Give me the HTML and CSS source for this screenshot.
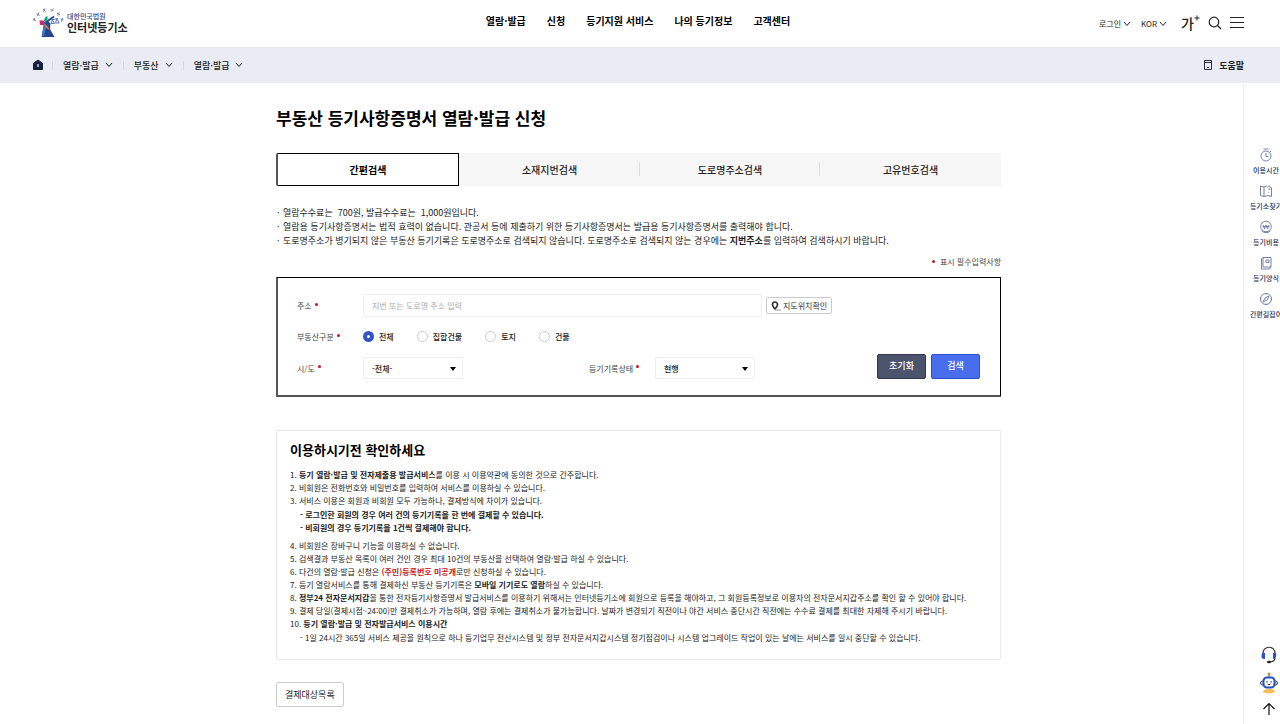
FILE: index.html
```html
<!DOCTYPE html>
<html lang="ko">
<head>
<meta charset="utf-8">
<meta name="viewport" content="width=device-width, initial-scale=1">
<title>인터넷등기소</title>
<link rel="stylesheet" href="styles.css">
</head>
<body>
<header class="header">
  <a class="logo" href="#">
    <svg class="logo-mark" viewBox="0 0 32 30" aria-hidden="true">
      <g fill="none" stroke="#6c80b8" stroke-width="1">
        <path d="M1 11l3 1.500M2.500 10l-.5 3M4.500 5.500l3 2M7 4.500l-1.500 3.500M11 1l2.500 2.500M13 .5l-1.500 3.500M18.500 1.500l3 1.500M21.500 .5l-2 3M25 5l3 2M27.500 4.500l-2 3M28.500 11l3 1M30.500 10l-1 3.500"/>
      </g>
      <path d="M12 14l4-1.500 2.500 3.500-.5 5 4.500 8H9.500l1.500-8z" fill="#24478f"/>
      <path d="M12 14l-2 14h2l2-9z" fill="#3f7cc4"/>
      <path d="M7.500 12.500h4.500V17H8z" fill="#d81f70"/>
      <path d="M12 12.500l1-3 2.500-1.500V12l-2 3z" fill="#169b78"/>
      <path d="M12 15.500q4 2 5.500 6.500-4-1.500-5.500-6.500z" fill="#ee7a2a"/>
      <path d="M15.500 13L22 8.500" stroke="#24478f" stroke-width="1.800"/>
      <path d="M19 12l7-1.500M20.500 11.500l-1.500 4M20.500 11.500l2 4M25 10.500L23.500 15M25 10.500l2 4.500M18.500 15.500h4M23.500 15h4" fill="none" stroke="#4f6db0" stroke-width=".9"/>
    </svg>
    <span class="logo-text"><small>대한민국법원</small><strong>인터넷등기소</strong></span>
  </a>
  <nav class="gnb" aria-label="주 메뉴">
    <a href="#">열람·발급</a><a href="#">신청</a><a href="#">등기지원 서비스</a><a href="#">나의 등기정보</a><a href="#">고객센터</a>
  </nav>
  <div class="utils">
    <button class="util" type="button">로그인<svg class="chevron" viewBox="0 0 8 6"><path d="M1 1l3 3.500L7 1"/></svg></button>
    <button class="util" type="button">KOR<svg class="chevron" viewBox="0 0 8 6"><path d="M1 1l3 3.500L7 1"/></svg></button>
    <button class="font-size" type="button">가<svg viewBox="0 0 6 6" aria-hidden="true"><path d="M3 .5v5M.5 3h5"/></svg></button>
    <button class="icon-button" type="button" aria-label="검색"><svg viewBox="0 0 14 14"><circle cx="6" cy="6" r="4.800"/><path d="M9.500 9.500L13 13"/></svg></button>
    <button class="icon-button" type="button" aria-label="전체메뉴"><svg viewBox="0 0 14 14"><path d="M0 1.500h14M0 6.500h14M0 11.500h14"/></svg></button>
  </div>
</header>
<div class="crumb-bar">
  <nav class="crumbs" aria-label="현재 위치">
    <a class="home" href="#" aria-label="홈"><svg viewBox="0 0 12 12"><path d="M6 1l4.500 3.300V10.500h-9V4.300z" fill="#17203f" stroke="#17203f" stroke-linejoin="round"/><path d="M6 5v3" stroke="#fff" stroke-width="1.200"/></svg></a>
    <button class="crumb" type="button">열람·발급<svg class="chevron" viewBox="0 0 8 6"><path d="M1 1l3 3.500L7 1"/></svg></button>
    <button class="crumb" type="button">부동산<svg class="chevron" viewBox="0 0 8 6"><path d="M1 1l3 3.500L7 1"/></svg></button>
    <button class="crumb" type="button">열람·발급<svg class="chevron" viewBox="0 0 8 6"><path d="M1 1l3 3.500L7 1"/></svg></button>
  </nav>
  <a class="help" href="#"><svg viewBox="0 0 10 10" aria-hidden="true"><path d="M1.500 .5h7v9h-7zM1.500 2.500h7M4 7.500h2" fill="none" stroke="#2a3040"/></svg>도움말</a>
</div>
<div class="page">
  <main class="main">
    <div class="content">
    <h1>부동산 등기사항증명서 열람·발급 신청</h1>
    <div class="tabs" role="tablist">
      <button class="tab tab-active" type="button" role="tab" aria-selected="true">간편검색</button>
      <button class="tab" type="button" role="tab">소재지번검색</button>
      <button class="tab" type="button" role="tab">도로명주소검색</button>
      <button class="tab" type="button" role="tab">고유번호검색</button>
    </div>
    <ul class="notes">
      <li>열람수수료는 &nbsp;700원, 발급수수료는 &nbsp;1,000원입니다.</li>
      <li>열람용 등기사항증명서는 법적 효력이 없습니다. 관공서 등에 제출하기 위한 등기사항증명서는 발급용 등기사항증명서를 출력해야 합니다.</li>
      <li>도로명주소가 병기되지 않은 부동산 등기기록은 도로명주소로 검색되지 않습니다. 도로명주소로 검색되지 않는 경우에는 <b>지번주소</b>를 입력하여 검색하시기 바랍니다.</li>
    </ul>
    <p class="required-note"><i class="dot"></i>표시 필수입력사항</p>
    <form class="search">
      <div class="row">
        <label class="label" for="address">주소<i class="dot"></i></label>
        <input class="address" id="address" type="text" placeholder="지번 또는 도로명 주소 입력">
        <button class="map" type="button"><svg viewBox="0 0 10 10" aria-hidden="true"><path d="M4 8C2 6 1.500 5 1.500 3.500a2.500 2.500 0 0 1 5 0C6.500 5 6 6 4 8z" fill="none" stroke="#333" stroke-width="1.700"/><path d="M4 9h6" stroke="#999"/></svg>지도위치확인</button>
      </div>
      <div class="row" role="radiogroup" aria-labelledby="kind">
        <span class="label" id="kind">부동산구분<i class="dot"></i></span>
        <div class="radios">
          <label><input type="radio" name="kind" checked>전체</label>
          <label><input type="radio" name="kind">집합건물</label>
          <label><input type="radio" name="kind">토지</label>
          <label><input type="radio" name="kind">건물</label>
        </div>
      </div>
      <div class="row row-last">
        <label class="label" for="region">시/도<i class="dot"></i></label>
        <span class="select"><select id="region"><option>-전체-</option></select></span>
        <label class="label label-status" for="status">등기기록상태<i class="dot"></i></label>
        <span class="select"><select id="status"><option>현행</option></select></span>
        <div class="actions">
          <button class="reset" type="reset">초기화</button>
          <button class="submit" type="button">검색</button>
        </div>
      </div>
    </form>
    <section class="notice">
      <h2>이용하시기전 확인하세요</h2>
      <ul class="notice-list">
        <li>1. <b>등기 열람·발급 및 전자제출용 발급서비스</b>를 이용 시 이용약관에 동의한 것으로 간주합니다.</li>
        <li>2. 비회원은 전화번호와 비밀번호를 입력하여 서비스를 이용하실 수 있습니다.</li>
        <li>3. 서비스 이용은 회원과 비회원 모두 가능하나, 결제방식에 차이가 있습니다.
          <ul class="sub sub-spaced"><li><b>- 로그인한 회원의 경우 여러 건의 등기기록을 한 번에 결제할 수 있습니다.</b></li><li><b>- 비회원의 경우 등기기록을 1건씩 결제해야 합니다.</b></li></ul>
        </li>
        <li>4. 비회원은 장바구니 기능을 이용하실 수 없습니다.</li>
        <li>5. 검색결과 부동산 목록이 여러 건인 경우 최대 10건의 부동산을 선택하여 열람·발급 하실 수 있습니다.</li>
        <li>6. 다건의 열람·발급 신청은 <b class="alert">(주민)등록번호 미공개</b>로만 신청하실 수 있습니다.</li>
        <li>7. 등기 열람서비스를 통해 결제하신 부동산 등기기록은 <b>모바일 기기로도 열람</b>하실 수 있습니다.</li>
        <li>8. <b>정부24 전자문서지갑</b>을 통한 전자등기사항증명서 발급서비스를 이용하기 위해서는 인터넷등기소에 회원으로 등록을 해야하고, 그 회원등록정보로 이용자의 전자문서지갑주소를 확인 할 수 있어야 합니다.</li>
        <li>9. 결제 당일(결제시점~24:00)만 결제취소가 가능하며, 열람 후에는 결제취소가 불가능합니다. 날짜가 변경되기 직전이나 야간 서비스 중단시간 직전에는 수수료 결제를 최대한 자제해 주시기 바랍니다.</li>
        <li>10. <b>등기 열람·발급 및 전자발급서비스 이용시간</b>
          <ul class="sub"><li>- 1일 24시간 365일 서비스 제공을 원칙으로 하나 등기업무 전산시스템 및 정부 전자문서지갑시스템 정기점검이나 시스템 업그레이드 작업이 있는 날에는 서비스를 일시 중단할 수 있습니다.</li></ul>
        </li>
      </ul>
    </section>
    <button class="pay-list" type="button">결제대상목록</button>
    </div>
  </main>
  <aside class="quick">
    <nav class="quick-links" aria-label="빠른 메뉴">
      <a href="#"><svg viewBox="0 0 14 14"><circle cx="7" cy="8" r="5"/><path d="M4.500 1h5M7 5v3.500h2.500M11 3l1 1"/></svg>이용시간</a>
      <a href="#"><svg viewBox="0 0 14 14"><path d="M1.500 2l3.500 1v9.500l-3.500-1zM5 3l3-1M5 12.500l4-1 3.500 1V3.500M8.500 3.500q.3-2 2-1.500 2 1 0 2.500l-.7 1.500M9.800 8v.8"/></svg>등기소찾기</a>
      <a href="#"><svg viewBox="0 0 14 14"><circle cx="7" cy="6.500" r="5.300"/><path d="M4 5l1.500 4L7 5l1.500 4L10 5M3.500 6.500h7M2.500 11q4.500 3.500 9 0"/></svg>등기비용</a>
      <a href="#"><svg viewBox="0 0 14 14"><path d="M4 1.500h8v9.500H4zM4 1.500L2.500 3v10h8l1.500-2M7 4h3v2.500H7z"/></svg>등기양식</a>
      <a href="#"><svg viewBox="0 0 14 14"><circle cx="7" cy="7" r="5.500"/><path d="M10 4L8 8l-4 2 2-4zM7 1.500v1M7 11.500v1M1.500 7h1M11.500 7h1"/></svg>간편길잡이</a>
    </nav>
    <div class="quick-tools">
      <button type="button" aria-label="상담"><svg viewBox="0 0 18 18"><path d="M3 8C2.500-1 15.500-1 15 8M15 12q0 3.500-5 4" fill="none" stroke="#333" stroke-width="1.200"/><path d="M2 7h3v6H4Q1.500 13 1.500 10zM13 7h3q1 6-3 6z" fill="#2b50c8"/><ellipse cx="9" cy="16" rx="2" ry="1.200" fill="#222"/></svg></button>
      <button type="button" aria-label="챗봇"><svg viewBox="0 0 18 22"><path d="M9 5V2" stroke="#555"/><circle cx="9" cy="2" r="1.500" fill="#c88a20"/><path d="M3 20q0-3 6-3t6 3q-6 3-12 0z" fill="#f8bd58"/><circle cx="2.500" cy="11" r="2" fill="#ddd" stroke="#345"/><circle cx="15.500" cy="11" r="2" fill="#ddd" stroke="#345"/><rect x="3.500" y="5.500" width="11" height="10" rx="3.500" fill="#fff" stroke="#2450bd" stroke-width="2"/><path d="M7 9v1.500M11 9v1.500M7.500 12q1.500 1.300 3 0" fill="none" stroke="#222"/></svg></button>
      <button type="button" aria-label="맨 위로"><svg viewBox="0 0 18 14"><path d="M9 13V1.500M3.500 7L9 1.500 14.500 7" fill="none" stroke="#111" stroke-width="1.200"/></svg></button>
    </div>
  </aside>
</div>
</body>
</html>
```
FILE: styles.css
```css
* { box-sizing: border-box; }
body {
  margin: 0;
  min-height: 100vh;
  display: flex;
  flex-direction: column;
  overflow-x: hidden;
  background: #fff;
  color: #222;
  font: 8px/13px "Noto Sans CJK KR", sans-serif;
}
h1, h2, p, ul { margin: 0; padding: 0; }
ul { list-style: none; }
a { color: inherit; text-decoration: none; }
button, input, select { font: inherit; color: inherit; }
button { padding: 0; border: 0; background: none; cursor: pointer; }
svg { flex: none; display: block; }
b { font-weight: 700; }

.header {
  height: 47px;
  padding: 0 36px 2px 32px;
  display: grid;
  grid-template-columns: 1fr auto 1fr;
  align-items: center;
}
.logo { display: flex; align-items: center; gap: 3px; }
.logo-mark { width: 32px; height: 30px; }
.logo-text { display: flex; flex-direction: column; }
.logo-text small { color: #2c437f; font-size: 7px; font-weight: 500; line-height: 9px; }
.logo-text strong { font-size: 11px; font-weight: 700; line-height: 13px; }
.gnb {
  display: flex;
  gap: 21px;
  padding-bottom: 4px;
  color: #000;
  font-size: 10px;
  font-weight: 700;
}
.utils { display: flex; align-items: center; justify-content: flex-end; gap: 8px; }
.util { display: flex; align-items: center; gap: 2px; padding-top: 2px; }
.util + .util { padding-left: 2px; }
.chevron { width: 8px; height: 6px; fill: none; stroke: #222; }
.font-size { display: flex; align-items: center; margin-left: 6px; font-size: 14px; font-weight: 500; line-height: 18px; }
.font-size svg { width: 6px; height: 6px; margin-bottom: 10px; stroke: #222; }
.icon-button svg { width: 14px; height: 14px; fill: none; stroke: #222; stroke-width: 1.2; }

.crumb-bar {
  height: 36px;
  padding: 0 36px 0 32px;
  display: flex;
  align-items: center;
  justify-content: space-between;
  background: #e9ecf5;
  font-size: 9px;
  font-weight: 500;
}
.crumbs { display: flex; align-items: center; }
.home { margin-right: 8px; }
.home svg { width: 12px; height: 12px; }
.crumb {
  height: 9px;
  display: flex;
  align-items: center;
  gap: 6px;
  margin-right: 10px;
  padding-left: 10px;
  border-left: 1px solid #d2d7e2;
}
.help { display: flex; align-items: center; gap: 6px; font-weight: 700; }
.help svg { width: 10px; height: 10px; }

.page { flex: 1; display: flex; }
.main { flex: 1; min-width: 0; padding: 24px 0 18px 34px; }
.content { max-width: 725px; margin: 0 auto; }
h1 { color: #000; font-size: 17px; font-weight: 700; line-height: 22px; }
.tabs { margin-top: 24px; display: grid; grid-template-columns: 183fr 181fr 180fr 181fr; }
.tab {
  height: 33px;
  position: relative;
  background: #f6f6f6;
  font-size: 10px;
  font-weight: 500;
}
.tab:not(:last-child):not(.tab-active)::after {
  content: "";
  position: absolute;
  right: 0;
  top: 9px;
  width: 1px;
  height: 14px;
  background: #ddd;
}
.tab-active {
  border: solid #000;
  border-width: 1px 1px 1px 2px;
  border-left-color: #555;
  border-radius: 2px 0 0 2px;
  background: #fff;
  color: #000;
  font-weight: 700;
}
.notes { margin-top: 20px; font-size: 9px; line-height: 14px; }
.notes li { padding-left: 7px; position: relative; }
.notes li::before { content: "·"; position: absolute; left: 1px; }
.required-note { margin-top: 7px; display: flex; align-items: center; justify-content: flex-end; gap: 5px; color: #444; }
.dot { flex: none; width: 3px; height: 3px; border-radius: 50%; background: #c4161c; }

.search {
  margin-top: 9px;
  padding: 16px 20px 16px 19px;
  border: solid #000;
  border-width: 1px 1px 2px 2px;
  border-bottom-color: #555;
  border-left-color: #555;
  border-radius: 1px;
}
.row { min-height: 23px; margin-bottom: 8px; display: flex; align-items: center; }
.row + .row { margin-bottom: 6px; }
.row + .row-last { margin: 0; align-items: flex-end; }
.label { flex: none; width: 66px; display: flex; align-items: center; gap: 3px; color: #444; }
.row-last .label { height: 22px; }
.label .dot { margin-bottom: 3px; }
.label-status { margin-left: 126px; }
.address {
  width: 399px;
  height: 23px;
  padding: 0 8px;
  border: 1px solid #eee;
  border-radius: 2px;
}
.address::placeholder { color: #aaa; opacity: 1; }
.map {
  height: 17px;
  margin-left: 4px;
  padding: 0 4px;
  display: flex;
  align-items: center;
  gap: 2px;
  border: 1px solid #ccc;
  border-radius: 2px;
  color: #333;
}
.map svg { width: 10px; height: 10px; }
.radios { display: flex; gap: 23px; font-weight: 500; }
.radios label { display: flex; align-items: center; gap: 5px; }
.radios input {
  appearance: none;
  width: 11px;
  height: 11px;
  margin: 0;
  border: 1px solid #ccc;
  border-radius: 50%;
}
.radios input:checked { border: 4px solid #3453c4; }
.select { position: relative; }
.select::after {
  content: "";
  position: absolute;
  right: 7px;
  top: 10px;
  border: solid transparent;
  border-width: 4px 3px 0;
  border-top-color: #000;
  pointer-events: none;
}
.select select {
  appearance: none;
  display: block;
  width: 100px;
  height: 22px;
  padding: 0 8px;
  border: 1px solid #eee;
  border-radius: 2px;
  background: #fff;
  font-weight: 500;
}
.actions { margin-left: auto; display: flex; gap: 5px; }
.actions button {
  width: 49px;
  height: 25px;
  padding-bottom: 2px;
  border: 1px solid #30384f;
  border-radius: 2px;
  background: #4c546d;
  color: #fff;
  font-size: 9px;
  font-weight: 500;
}
.actions .submit { border-color: #2950ce; background: #486ded; }

.notice { margin-top: 33px; padding: 11px 13px 15px; border: 1px solid #e8e8e8; border-radius: 2px; }
.notice h2 { margin-bottom: 10px; color: #000; font-size: 13px; font-weight: 700; line-height: 16px; }
.sub { padding: 1px 0 0 10px; }
.sub-spaced { margin-bottom: 5px; }
.alert { color: #c4161c; }
.pay-list {
  display: block;
  height: 25px;
  margin-top: 22px;
  padding: 0 8px;
  border: 1px solid #ccc;
  border-radius: 2px;
  font-size: 9px;
}

.quick {
  width: 37px;
  overflow: hidden;
  display: flex;
  flex-direction: column;
  justify-content: space-between;
  border-left: 1px solid #eee;
  padding: 65px 0 9px;
}
.quick-links { width: 44px; display: flex; flex-direction: column; gap: 9px; }
.quick-links a {
  display: flex;
  flex-direction: column;
  align-items: center;
  gap: 3px;
  color: #26315c;
  font-size: 7px;
  font-weight: 500;
  line-height: 10px;
  white-space: nowrap;
}
.quick-links svg { width: 14px; height: 14px; fill: none; stroke: #66759b; stroke-width: .9; }
.quick-tools { width: 50px; display: flex; flex-direction: column; align-items: center; gap: 8px; }
.quick-tools svg { width: 18px; }
```
